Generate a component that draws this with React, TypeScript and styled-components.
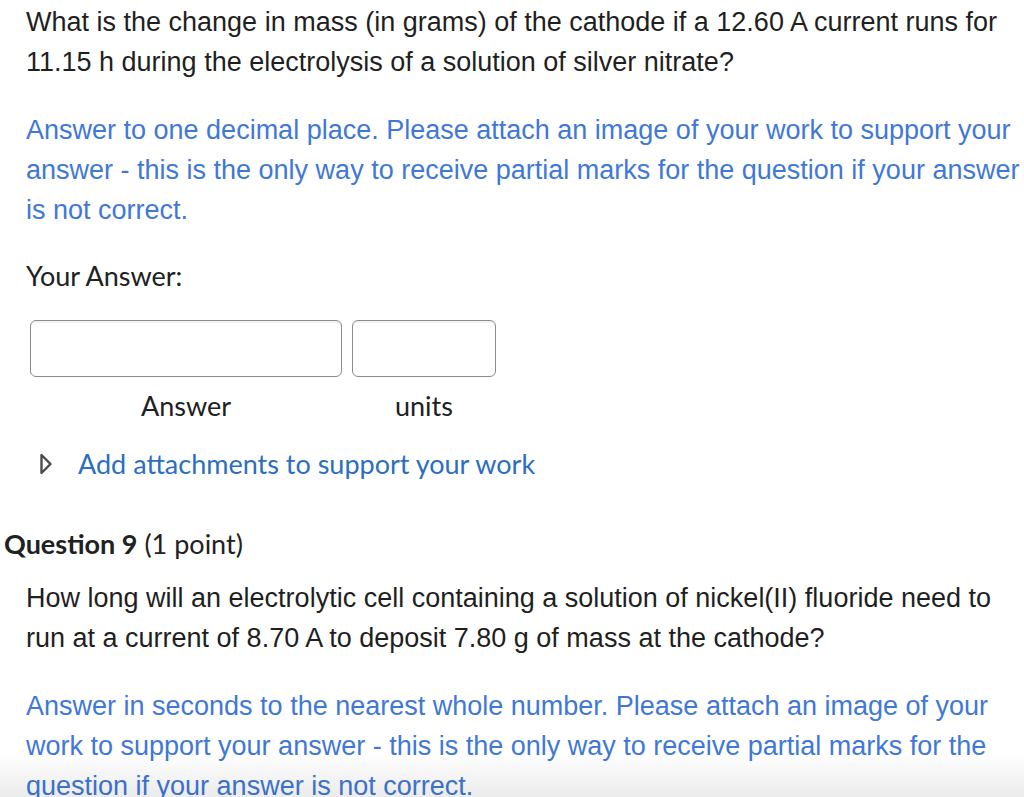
import React from "react";
import styled, { createGlobalStyle } from "styled-components";

const GlobalStyle = createGlobalStyle`
  html, body {
    margin: 0;
    padding: 0;
    background: #ffffff;
    overflow: hidden;
  }
  body {
    font-family: "Liberation Sans", Arial, sans-serif;
    color: #222222;
  }
`;

export default function App() {
  return (
    <Page>
      <GlobalStyle />
      <QuestionBody>
        <Prompt>
          What is the change in mass (in grams) of the cathode if a 12.60 A current runs for
          11.15 h during the electrolysis of a solution of silver nitrate?
        </Prompt>
        <Instruction>
          Answer to one decimal place. Please attach an image of your work to support your
          answer - this is the only way to receive partial marks for the question if your answer
          is not correct.
        </Instruction>
        <AnswerHeading>Your Answer:</AnswerHeading>
        <AnswerGrid>
          <TextBox aria-label="Answer" />
          <TextBox aria-label="units" />
          <FieldLabel>Answer</FieldLabel>
          <FieldLabel>units</FieldLabel>
        </AnswerGrid>
        <AttachLink>
          <Caret viewBox="0 0 12 22" width="12" height="22">
            <path d="M1.5 2 L10.5 11 L1.5 20 Z" fill="none" stroke="#494c4e" strokeWidth="2.4" strokeLinejoin="round" />
          </Caret>
          <LinkText>Add attachments to support your work</LinkText>
        </AttachLink>
      </QuestionBody>

      <QuestionTitle>
        <strong>Question 9</strong> (1 point)
      </QuestionTitle>
      <QuestionBody>
        <Prompt $top={19}>
          How long will an electrolytic cell containing a solution of nickel(II) fluoride need to
          run at a current of 8.70 A to deposit 7.80 g of mass at the cathode?
        </Prompt>
        <Instruction>
          Answer in seconds to the nearest whole number. Please attach an image of your
          work to support your answer - this is the only way to receive partial marks for the
          question if your answer is not correct.
        </Instruction>
      </QuestionBody>
      <BottomShade />
    </Page>
  );
}

const Page = styled.main`
  width: 1024px;
  height: 797px;
  padding-top: 2px;
  box-sizing: border-box;
`;

const QuestionBody = styled.section`
  padding-left: 26px;
  padding-right: 2px;
`;

const Prompt = styled.p<{ $top?: number }>`
  margin: ${(p) => p.$top ?? 0}px 0 0;
  font-size: 27px;
  line-height: 40px;
  color: #1f1f1f;
`;

const Instruction = styled.p`
  margin: 28px 0 0;
  font-size: 27px;
  line-height: 40px;
  color: #3f78d8;
`;

const AnswerHeading = styled.h3`
  margin: 26px 0 0;
  font-family: Lato, "Liberation Sans", sans-serif;
  font-weight: 400;
  font-size: 27px;
  line-height: 40px;
  color: #202122;
`;

const AnswerGrid = styled.div`
  display: grid;
  grid-template-columns: 312px 144px;
  column-gap: 10px;
  margin: 24px 0 0 4px;
`;

const TextBox = styled.input`
  box-sizing: border-box;
  height: 57px;
  width: 100%;
  border: 1.5px solid #8a8d90;
  border-radius: 6px;
  background: #ffffff;
  box-shadow: inset 0 2px 0 #f1f2f3;
  outline: none;
`;

const FieldLabel = styled.span`
  margin-top: 14px;
  text-align: center;
  font-family: Lato, "Liberation Sans", sans-serif;
  font-size: 27px;
  line-height: 30px;
  color: #202122;
`;

const AttachLink = styled.div`
  display: flex;
  align-items: center;
  gap: 26px;
  margin-top: 28px;
  padding-left: 14px;
  height: 30px;
`;

const Caret = styled.svg`
  flex: none;
`;

const LinkText = styled.span`
  font-family: Lato, "Liberation Sans", sans-serif;
  font-size: 27px;
  line-height: 30px;
  color: #2c6ec0;
`;

const QuestionTitle = styled.h2`
  margin: 50px 0 0 4px;
  font-family: Lato, "Liberation Sans", sans-serif;
  font-weight: 400;
  font-size: 27px;
  line-height: 30px;
  color: #202122;

  strong {
    font-weight: 700;
  }
`;

const BottomShade = styled.div`
  position: fixed;
  left: 0;
  right: 0;
  bottom: 0;
  height: 44px;
  pointer-events: none;
  background: linear-gradient(to bottom, rgba(0, 0, 0, 0), rgba(0, 0, 0, 0.08));
`;
